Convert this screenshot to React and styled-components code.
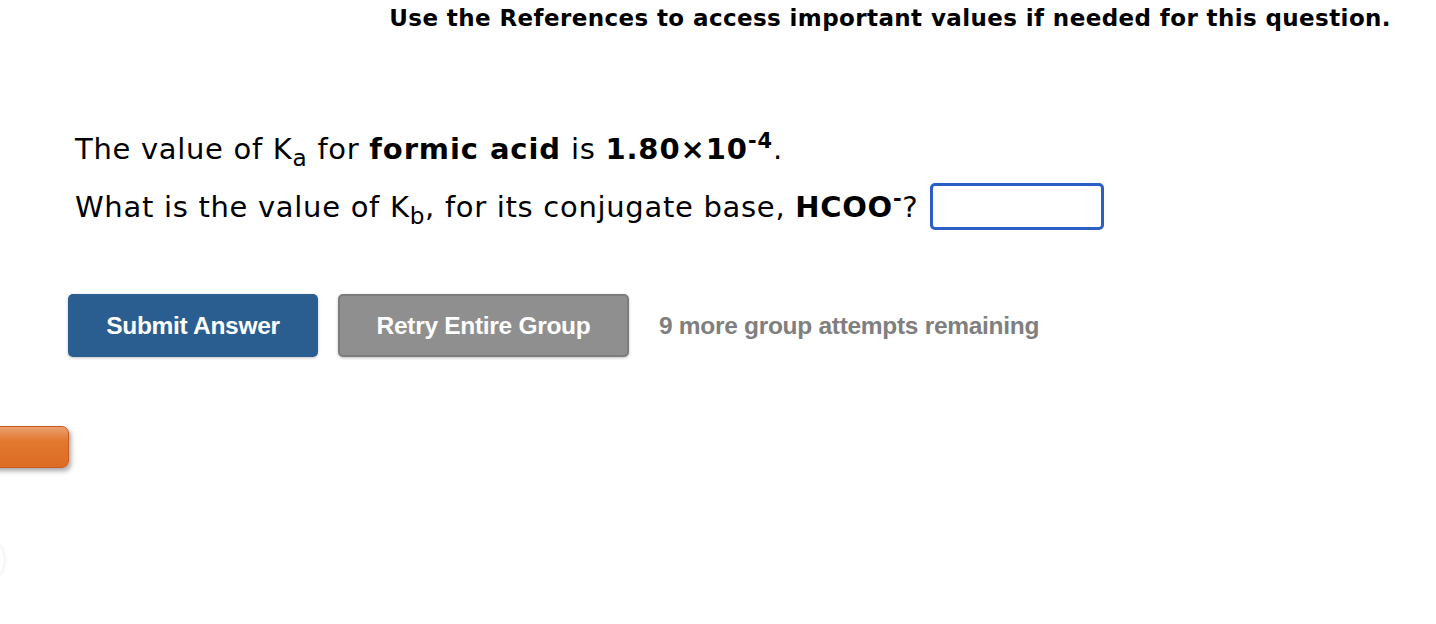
import React from "react";
import styled, { createGlobalStyle } from "styled-components";

const Global = createGlobalStyle`
  html, body { margin: 0; padding: 0; background: #fff; }
  body { font-family: "DejaVu Sans", Verdana, sans-serif; color: #000; overflow: hidden; }
`;

const Page = styled.div`
  position: relative;
  width: 1436px;
  height: 624px;
  overflow: hidden;
`;

const RefBar = styled.div`
  display: flex;
  justify-content: flex-end;
  padding: 3px 45px 0 0;
  font-family: "DejaVu Sans", Verdana, sans-serif;
  font-weight: bold;
  font-size: 23px;
  letter-spacing: 0.4px;
  line-height: 30px;
`;

const Question = styled.div`
  padding: 87px 0 0 75px;
  font-size: 29px;
  letter-spacing: 0.7px;
  line-height: 58px;
`;

const Line = styled.div`
  white-space: nowrap;
`;

const Strong = styled.b`
  letter-spacing: ${(p) => (p.$wide ? "0.9px" : "0.7px")};
`;

const Sub = styled.sub`
  font-size: 0.8em;
  vertical-align: -0.3em;
  line-height: 0;
`;

const Sup = styled.sup`
  font-size: 0.72em;
  vertical-align: 0.55em;
  line-height: 0;
`;

const AnswerInput = styled.input`
  box-sizing: border-box;
  display: inline-block;
  vertical-align: middle;
  width: 174px;
  height: 47px;
  margin: 0 0 5px 12px;
  border: 3px solid #2b5fc6;
  border-radius: 5px;
  outline: none;
  font-size: 20px;
`;

const Actions = styled.div`
  display: flex;
  align-items: center;
  gap: 20px;
  padding: 58px 0 0 68px;
`;

const Button = styled.button`
  box-sizing: border-box;
  height: 63px;
  width: ${(p) => p.$w}px;
  padding: 0;
  border-radius: 5px;
  border: ${(p) => (p.$variant === "gray" ? "2px solid #7c7c7c" : "none")};
  background: ${(p) => (p.$variant === "gray" ? "#8f8f8f" : "#2a5e91")};
  color: #fff;
  font-family: "Liberation Sans", Arial, sans-serif;
  font-weight: bold;
  font-size: 24.5px;
  letter-spacing: -0.3px;
  box-shadow: 0 1px 3px rgba(0, 0, 0, 0.25);
`;

const Attempts = styled.span`
  margin-left: 10px;
  font-family: "Liberation Sans", Arial, sans-serif;
  font-weight: bold;
  font-size: 24.5px;
  color: #7f7f7f;
  letter-spacing: -0.3px;
`;

const SideTab = styled.div`
  position: absolute;
  left: -20px;
  top: 426px;
  width: 89px;
  height: 42px;
  box-sizing: border-box;
  border-radius: 7px;
  border: 1px solid #c85a22;
  background: linear-gradient(#eba06f 0%, #e2782f 35%, #dd6c24 100%);
  box-shadow: 2px 3px 5px rgba(0, 0, 0, 0.35);
`;

const SideKnob = styled.div`
  position: absolute;
  left: -44px;
  top: 536px;
  width: 48px;
  height: 48px;
  border-radius: 50%;
  background: #fff;
  box-shadow: 0 0 4px rgba(0, 0, 0, 0.12);
`;

export default function App() {
  return (
    <>
      <Global />
      <Page>
        <RefBar>Use the References to access important values if needed for this question.</RefBar>
        <Question>
          <Line>
            The value of K<Sub>a</Sub> for <Strong $wide>formic acid</Strong> is{" "}
            <Strong $wide>
              1.80×10<Sup>-4</Sup>
            </Strong>
            .
          </Line>
          <Line>
            What is the value of K<Sub>b</Sub>, for its conjugate base, <Strong>HCOO<Sup>-</Sup></Strong>?
            <AnswerInput type="text" />
          </Line>
        </Question>
        <Actions>
          <Button $w={250}>Submit Answer</Button>
          <Button $w={291} $variant="gray">Retry Entire Group</Button>
          <Attempts>9 more group attempts remaining</Attempts>
        </Actions>
        <SideTab />
        <SideKnob />
      </Page>
    </>
  );
}
